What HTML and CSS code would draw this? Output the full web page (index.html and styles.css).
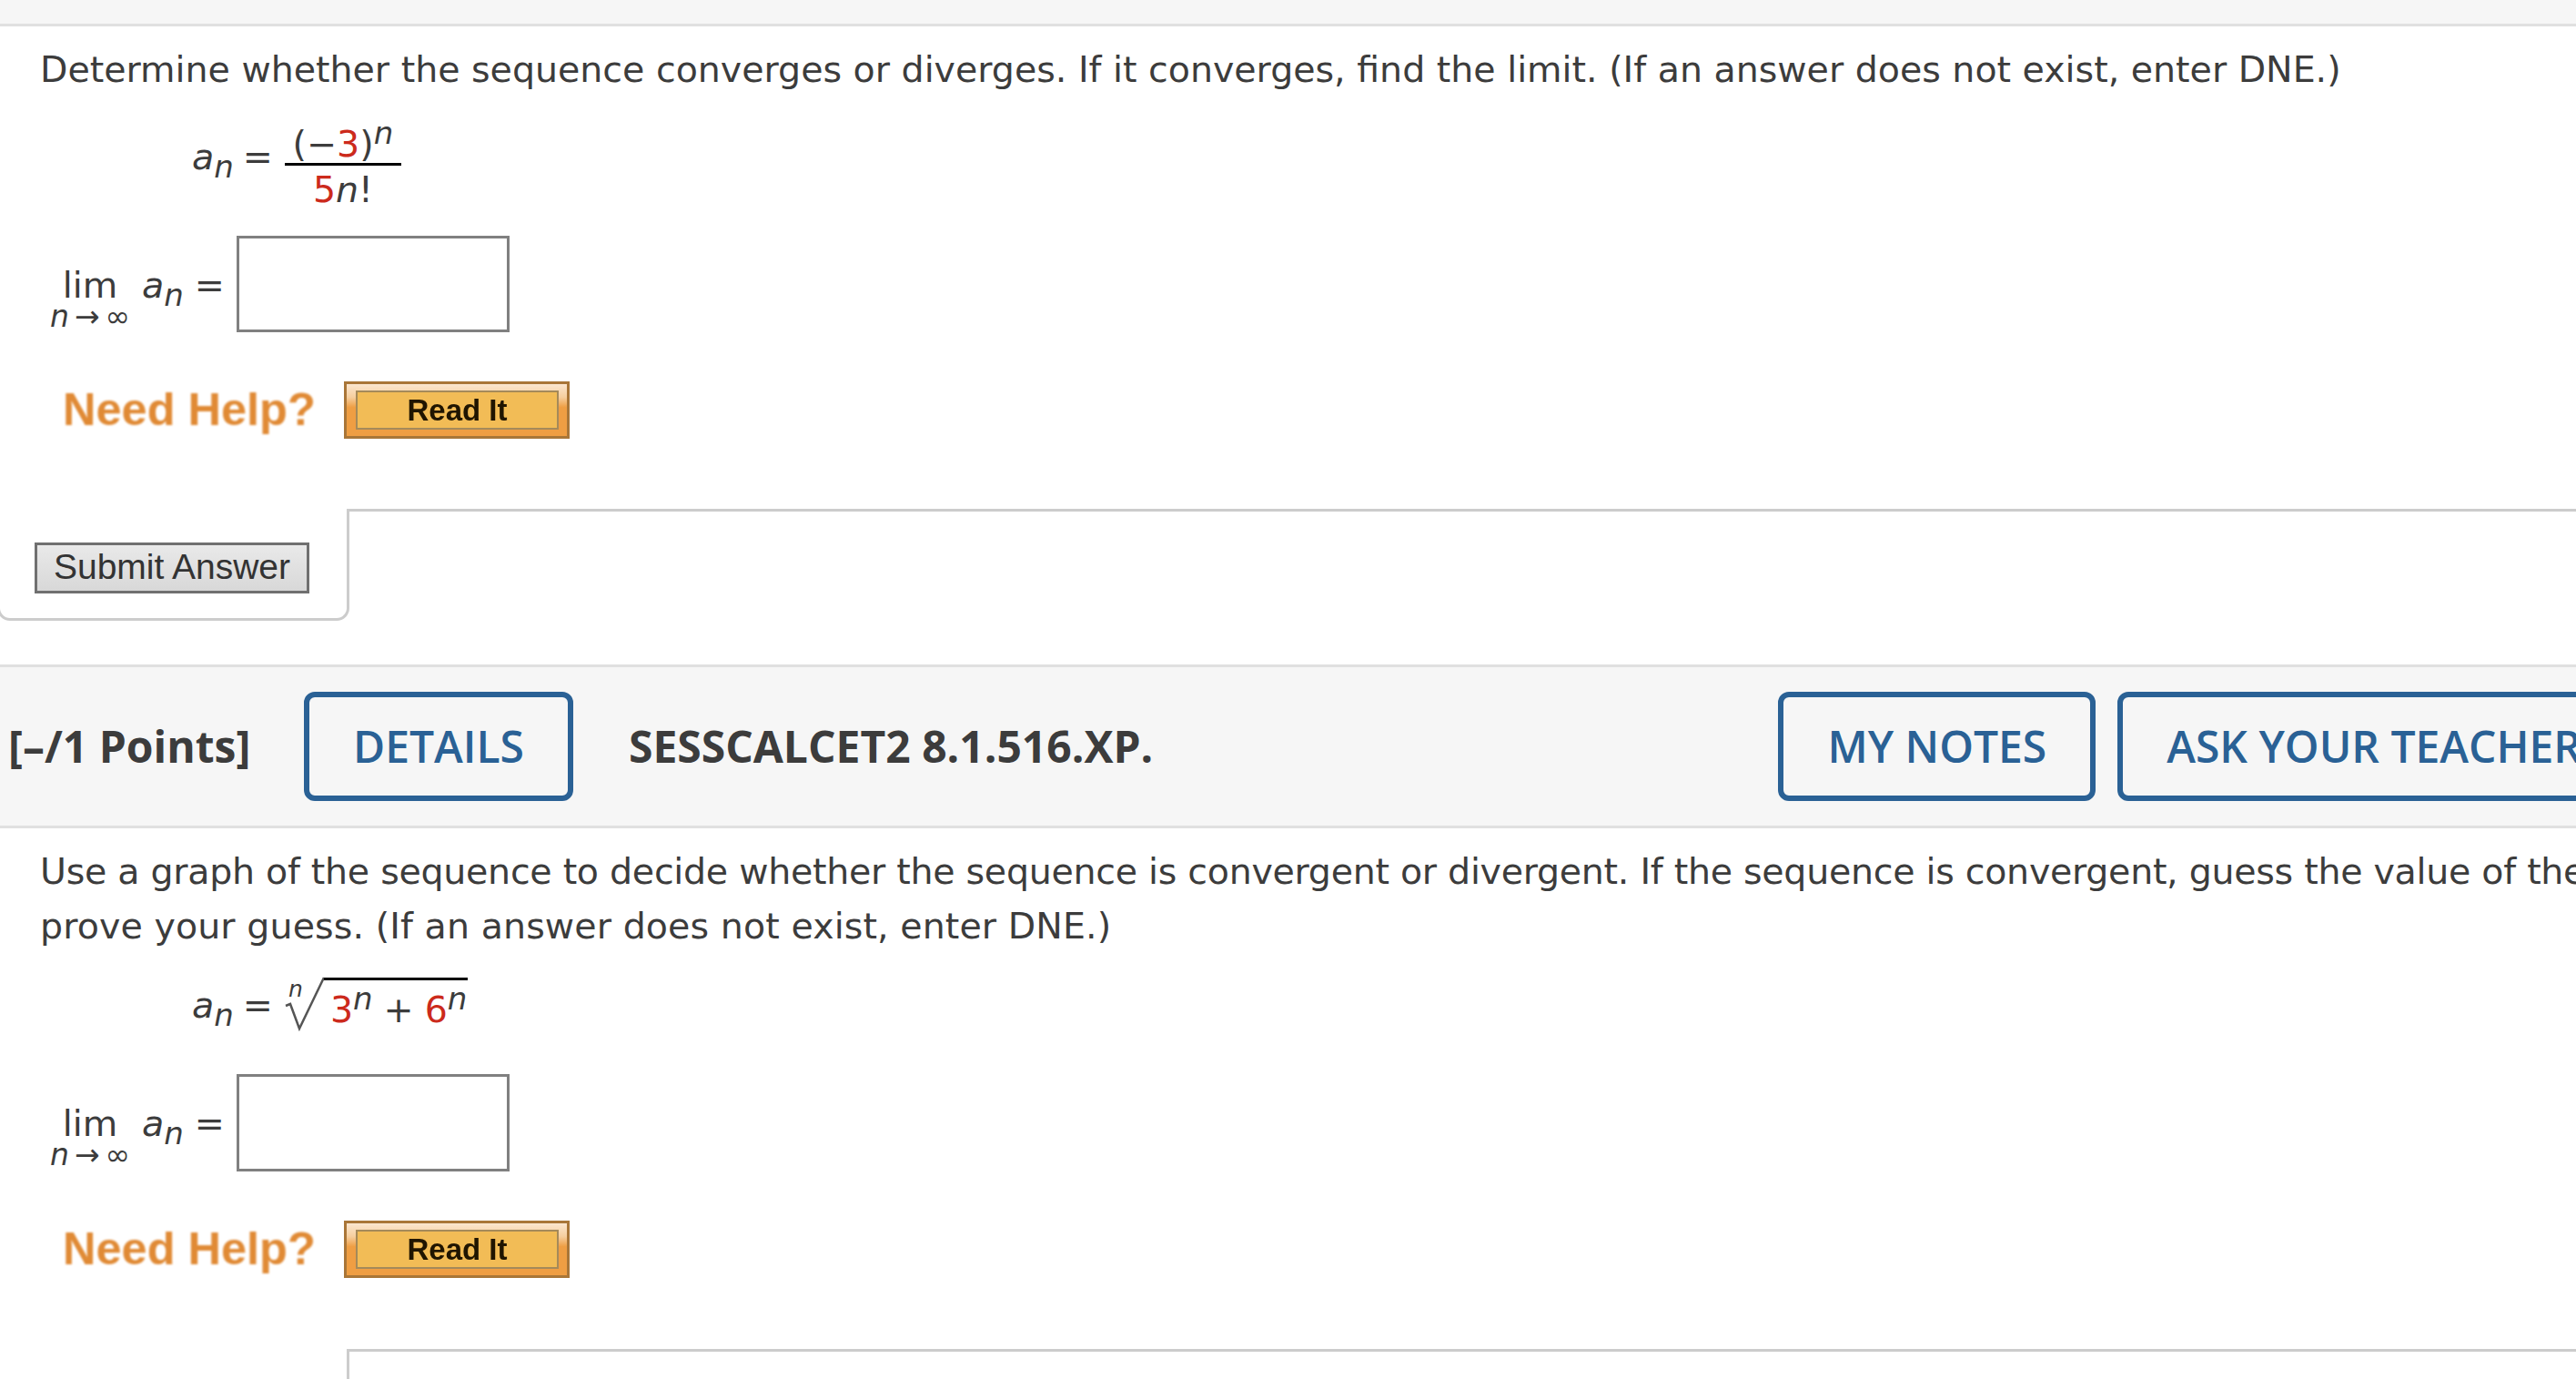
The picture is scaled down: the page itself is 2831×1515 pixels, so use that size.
FILE: index.html
```html
<!DOCTYPE html>
<html lang="en">
<head>
    <meta charset="UTF-8">
    <title>SESSCALCET2 8.1</title>
    <link rel="stylesheet" href="styles.css">
</head>

<body>
    <div class="page">
        <div class="top-band"></div>

        <!-- Question 1 -->
        <div class="question">
            <p class="prompt prompt-first">Determine whether the sequence converges or diverges. If it converges, find the limit. (If an answer does not exist, enter DNE.)</p>

            <div class="formula">
                <span class="lhs">
                    <span class="var">a</span><span class="sub">n</span>
                    <span class="equals">=</span>
                </span>
                <span class="frac">
                    <span class="num">(&minus;<span class="red">3</span>)<span class="sup">n</span></span>
                    <span class="den"><span class="red">5</span><span class="var">n</span>!</span>
                </span>
            </div>

            <div class="limit-row">
                <span class="limit-label">
                    <span class="lim">
                        <span class="lim-word">lim</span>
                        <span class="lim-under"><i>n</i><span class="arrow">&rarr;</span>&infin;</span>
                    </span>
                    <span class="var">a</span><span class="sub">n</span>
                    <span class="equals">=</span>
                </span>
                <input type="text" class="answer">
            </div>

            <div class="help-row">
                <span class="need-help">Need Help?</span>
                <span class="read-it"><span class="read-it-inner"><span class="read-it-text">Read It</span></span></span>
            </div>
        </div>

        <div class="actions">
            <div class="actions-left">
                <button type="button" class="submit-btn">Submit Answer</button>
            </div>
            <div class="actions-right"></div>
        </div>

        <!-- Question 2 -->
        <div class="q-header">
            <span class="points">[&ndash;/1 Points]</span>
            <button type="button" class="outline-btn details-btn">DETAILS</button>
            <span class="q-title">SESSCALCET2 8.1.516.XP.</span>
            <button type="button" class="outline-btn notes-btn">MY NOTES</button>
            <button type="button" class="outline-btn">ASK YOUR TEACHER</button>
        </div>

        <div class="question question-next">
            <p class="prompt"><span class="line-tight">Use a graph of the sequence to decide whether the sequence is convergent or divergent. If the sequence is convergent, guess the value of the limit from the graph and then</span><br><span class="line-loose">prove your guess. (If an answer does not exist, enter DNE.)</span></p>

            <div class="formula">
                <span class="lhs">
                    <span class="var">a</span><span class="sub">n</span>
                    <span class="equals">=</span>
                </span>
                <span class="root">
                    <span class="root-index">n</span>
                    <svg class="radical" width="46" height="62" viewBox="0 0 46 62">
                        <path d="M2 33 L7 31 L17 58 L44 2" fill="none" stroke="#555" stroke-width="2.5"/>
                    </svg>
                    <span class="radicand"><span class="red">3</span><span class="sup">n</span><span class="plus">+</span><span class="red">6</span><span class="sup">n</span></span>
                </span>
            </div>

            <div class="limit-row">
                <span class="limit-label">
                    <span class="lim">
                        <span class="lim-word">lim</span>
                        <span class="lim-under"><i>n</i><span class="arrow">&rarr;</span>&infin;</span>
                    </span>
                    <span class="var">a</span><span class="sub">n</span>
                    <span class="equals">=</span>
                </span>
                <input type="text" class="answer">
            </div>

            <div class="help-row">
                <span class="need-help">Need Help?</span>
                <span class="read-it"><span class="read-it-inner"><span class="read-it-text">Read It</span></span></span>
            </div>
        </div>

        <div class="actions">
            <div class="actions-left">
                <button type="button" class="submit-btn">Submit Answer</button>
            </div>
            <div class="actions-right"></div>
        </div>
    </div>
</body>
</html>
```

FILE: styles.css
```css
html, body {
    margin: 0;
    height: 100%;
    overflow: hidden;
    background-color: #ffffff;
}

.page {
    width: 2891px;
    font-family: "DejaVu Sans", sans-serif;
    font-size: 39.5px;
    color: #3c3c3c;
}

.top-band {
    height: 26px;
    background-color: #f6f6f6;
    border-bottom: 3px solid #e0e0e0;
}

.prompt {
    margin: 0;
    padding: 17px 0 0 44px;
    line-height: 60px;
    white-space: nowrap;
}

.prompt-first {
    margin-bottom: -1px;
}

.line-tight {
    letter-spacing: -0.27px;
}

.line-loose {
    letter-spacing: 0.1px;
}

.red {
    color: #cc2a1c;
}

.var,
.sub,
.sup,
.lim-under i,
.root-index {
    font-style: italic;
}

.sub {
    font-size: 34px;
    position: relative;
    top: 9px;
}

.sup {
    font-size: 34px;
    position: relative;
    top: -14px;
}

.equals {
    margin: 0 13px 0 10px;
}

/* formula row */
.formula {
    display: flex;
    align-items: center;
    margin: 21px 0 23px 211px;
}

.lhs {
    display: flex;
    align-items: baseline;
    margin-bottom: 18px;
}

.frac {
    display: inline-flex;
    flex-direction: column;
    align-items: center;
    width: 128px;
}

.num {
    height: 53px;
    line-height: 64px;
    border-bottom: 3px solid #000;
    width: 100%;
    text-align: center;
    white-space: nowrap;
}

.den {
    height: 54px;
    line-height: 53px;
}

.root {
    display: inline-flex;
    position: relative;
    height: 89px;
    align-items: flex-start;
    margin-left: -1px;
}

.root-index {
    position: absolute;
    left: 5px;
    top: 4px;
    font-size: 25px;
}

.radical {
    margin-top: 4px;
}

.radicand {
    border-top: 3px solid #000;
    margin-left: -2px;
    margin-top: 6px;
    padding: 0 1px 0 7px;
    line-height: 65px;
    white-space: nowrap;
}

.plus {
    margin: 0 12px;
}

/* limit row */
.limit-row {
    display: flex;
    align-items: flex-start;
    margin-left: 54px;
}

.limit-label {
    display: flex;
    align-items: baseline;
    width: 206px;
    padding-top: 31px;
}

.lim {
    display: flex;
    flex-direction: column;
    align-items: center;
    margin-right: 12px;
    width: 90px;
}

.lim-word {
    line-height: 44px;
}

.lim-under {
    font-size: 33px;
    line-height: 30px;
    margin-top: -2px;
    white-space: nowrap;
}

.arrow {
    margin: 0 6px;
}

.limit-label .equals {
    margin: 0 0 0 12px;
}

.answer {
    width: 300px;
    height: 106px;
    box-sizing: border-box;
    border: 3px solid #808080;
    background: #fff;
    margin: 0;
    padding: 0;
}

.question-next .answer {
    height: 107px;
}

/* need help row */
.help-row {
    display: flex;
    align-items: center;
    margin: 54px 0 77px 69px;
}

.question-next .help-row {
    margin-bottom: 78px;
}

.need-help {
    width: 309px;
    margin-bottom: 3px;
    font-family: "Liberation Sans", Arial, sans-serif;
    font-size: 50.5px;
    font-weight: bold;
    color: #e08a35;
    filter: blur(0.9px);
    white-space: nowrap;
}

.read-it {
    display: block;
    box-sizing: border-box;
    width: 248px;
    height: 63px;
    padding: 7px 9px 7px 10px;
    border: 3px solid #a97638;
    background: linear-gradient(#fbe6cf 0, #f6cf9f 25%, #ef9e43 45%, #ef9e43 100%);
}

.read-it-inner {
    display: flex;
    align-items: center;
    justify-content: center;
    box-sizing: border-box;
    height: 43px;
    border: 2px solid #a58a5a;
    background-color: #f2bc56;
}

.read-it-text {
    font-family: "Liberation Sans", Arial, sans-serif;
    font-size: 33px;
    font-weight: bold;
    color: #201500;
    filter: blur(0.7px);
}

/* submit area */
.actions {
    display: flex;
    margin-left: -3px;
}

.actions-left {
    box-sizing: border-box;
    width: 387px;
    height: 123px;
    padding: 37px 0 0 38px;
    border: 3px solid #cccccc;
    border-top: none;
    border-radius: 0 0 14px 14px;
}

.actions-right {
    flex: 1;
    border-top: 3px solid #cccccc;
}

.submit-btn {
    box-sizing: border-box;
    width: 302px;
    height: 56px;
    padding: 0 0 3px;
    border: 3px solid #707070;
    background: linear-gradient(#e9e9e9, #d8d8d8);
    font-family: "Liberation Sans", Arial, sans-serif;
    font-size: 39px;
    color: #333333;
}

/* question header */
.q-header {
    display: flex;
    align-items: center;
    box-sizing: border-box;
    height: 180px;
    margin-top: 48px;
    padding-left: 9px;
    background-color: #f6f6f6;
    border-top: 3px solid #e0e0e0;
    border-bottom: 3px solid #e0e0e0;
    font-family: "Open Sans", sans-serif;
    font-size: 48px;
}

.points {
    width: 325px;
    padding-bottom: 1px;
    font-weight: bold;
}

.q-title {
    margin-left: 61px;
    margin-right: auto;
    padding-bottom: 1px;
    font-weight: bold;
}

.outline-btn {
    box-sizing: border-box;
    height: 120px;
    padding: 0 48px 1px;
    border: 6px solid #2a6195;
    border-radius: 12px;
    background: transparent;
    color: #2a6195;
    font-family: "Open Sans", sans-serif;
    font-size: 48px;
    font-weight: 600;
    white-space: nowrap;
}

.notes-btn {
    margin-right: 24px;
}
```
